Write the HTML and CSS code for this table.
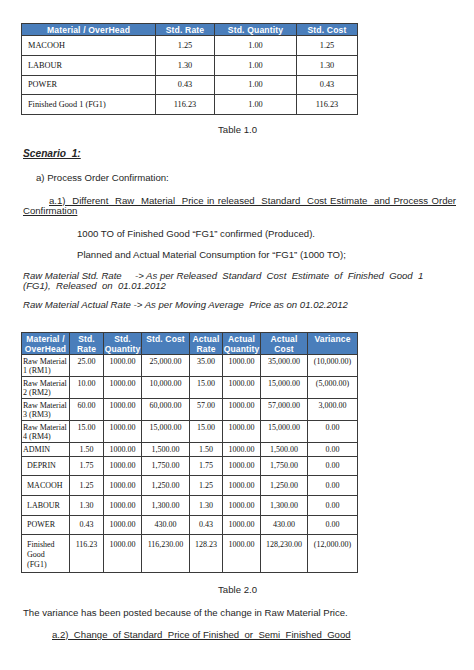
FILE: index.html
```html
<!DOCTYPE html>
<html>
<head>
<meta charset="utf-8">
<link rel="stylesheet" href="styles.css">
</head>
<body>
<div class="page">
  <table class="grid t1">
    <colgroup><col class="c134"><col class="c59"><col class="c82"><col class="c61"></colgroup>
    <thead>
      <tr class="h1"><th>Material / OverHead</th><th>Std. Rate</th><th>Std. Quantity</th><th>Std. Cost</th></tr>
    </thead>
    <tbody>
      <tr class="r20"><td class="name">MACOOH</td><td>1.25</td><td>1.00</td><td>1.25</td></tr>
      <tr class="r20"><td class="name">LABOUR</td><td>1.30</td><td>1.00</td><td>1.30</td></tr>
      <tr class="r19"><td class="name">POWER</td><td>0.43</td><td>1.00</td><td>0.43</td></tr>
      <tr class="r20"><td class="name">Finished Good 1 (FG1)</td><td>116.23</td><td>1.00</td><td>116.23</td></tr>
    </tbody>
  </table>

  <p class="caption cap1">Table 1.0</p>
  <p class="scenario">Scenario&nbsp; 1:</p>
  <p class="txt sub-a">a) Process Order Confirmation:</p>
  <p class="txt heading-a1">a.1)&nbsp; Different&nbsp; Raw&nbsp; Material&nbsp; Price in released&nbsp; Standard&nbsp; Cost Estimate&nbsp; and Process Order Confirmation</p>
  <p class="txt deep p1000">1000 TO of Finished Good “FG1” confirmed (Produced).</p>
  <p class="txt deep planned">Planned and Actual Material Consumption for “FG1” (1000 TO);</p>
  <p class="txt ital stdrate">Raw Material Std. Rate &nbsp;&nbsp;&nbsp;&nbsp;-&gt; As per Released&nbsp; Standard&nbsp; Cost&nbsp; Estimate&nbsp; of&nbsp; Finished&nbsp; Good&nbsp; 1<br>(FG1),&nbsp; Released&nbsp; on&nbsp; 01.01.2012</p>
  <p class="txt ital actrate">Raw Material Actual Rate -&gt; As per Moving Average&nbsp; Price as on 01.02.2012</p>

  <table class="grid t2">
    <colgroup><col class="w48"><col class="w34"><col class="w38"><col class="w48"><col class="w33"><col class="w38"><col class="w47"><col class="w50"></colgroup>
    <thead>
      <tr class="h2"><th>Material /<br>OverHead</th><th>Std.<br>Rate</th><th>Std.<br>Quantity</th><th class="top">Std. Cost</th><th>Actual<br>Rate</th><th>Actual<br>Quantity</th><th>Actual<br>Cost</th><th class="top">Variance</th></tr>
    </thead>
    <tbody>
      <tr class="rm"><td class="n1">Raw Material<br>1 (RM1)</td><td>25.00</td><td>1000.00</td><td>25,000.00</td><td>35.00</td><td>1000.00</td><td>35,000.00</td><td>(10,000.00)</td></tr>
      <tr class="rm"><td class="n1">Raw Material<br>2 (RM2)</td><td>10.00</td><td>1000.00</td><td>10,000.00</td><td>15.00</td><td>1000.00</td><td>15,000.00</td><td>(5,000.00)</td></tr>
      <tr class="rm"><td class="n1">Raw Material<br>3 (RM3)</td><td>60.00</td><td>1000.00</td><td>60,000.00</td><td>57.00</td><td>1000.00</td><td>57,000.00</td><td>3,000.00</td></tr>
      <tr class="rm"><td class="n1">Raw Material<br>4 (RM4)</td><td>15.00</td><td>1000.00</td><td>15,000.00</td><td>15.00</td><td>1000.00</td><td>15,000.00</td><td>0.00</td></tr>
      <tr class="admin"><td class="n1">ADMIN</td><td>1.50</td><td>1000.00</td><td>1,500.00</td><td>1.50</td><td>1000.00</td><td>1,500.00</td><td>0.00</td></tr>
      <tr class="mid h19"><td class="n2">DEPRIN</td><td>1.75</td><td>1000.00</td><td>1,750.00</td><td>1.75</td><td>1000.00</td><td>1,750.00</td><td>0.00</td></tr>
      <tr class="mid h20"><td class="n2">MACOOH</td><td>1.25</td><td>1000.00</td><td>1,250.00</td><td>1.25</td><td>1000.00</td><td>1,250.00</td><td>0.00</td></tr>
      <tr class="mid h20"><td class="n2">LABOUR</td><td>1.30</td><td>1000.00</td><td>1,300.00</td><td>1.30</td><td>1000.00</td><td>1,300.00</td><td>0.00</td></tr>
      <tr class="mid h19"><td class="n2">POWER</td><td>0.43</td><td>1000.00</td><td>430.00</td><td>0.43</td><td>1000.00</td><td>430.00</td><td>0.00</td></tr>
      <tr class="fg"><td class="n2">Finished<br>Good<br>(FG1)</td><td>116.23</td><td>1000.00</td><td>116,230.00</td><td>128.23</td><td>1000.00</td><td>128,230.00</td><td>(12,000.00)</td></tr>
    </tbody>
  </table>

  <p class="caption cap2">Table 2.0</p>
  <p class="txt variance">The variance has been posted because of the change in Raw Material Price.</p>
  <p class="txt heading-a2">a.2)&nbsp; Change&nbsp; of Standard&nbsp; Price of Finished&nbsp; or&nbsp; Semi&nbsp; Finished&nbsp; Good</p>
</div>
</body>
</html>
```

FILE: styles.css
```css
html, body {
  margin: 0;
  padding: 0;
  background: #ffffff;
}

.page {
  width: 474px;
  height: 670px;
  box-sizing: border-box;
  padding: 23px 18px 0 21px;
  font-family: "Liberation Sans", Arial, sans-serif;
  color: #262626;
  overflow: hidden;
}

p {
  margin: 0;
}

.grid {
  border-collapse: collapse;
  table-layout: fixed;
  width: 336px;
  font-family: "Liberation Serif", "Times New Roman", serif;
  color: #111111;
}

.grid th,
.grid td {
  border: 1px solid #3a3a3a;
  padding: 0;
  text-align: center;
  box-sizing: border-box;
}

.grid th {
  background: #4a7ebb;
  color: #ffffff;
  font-family: "Liberation Sans", Arial, sans-serif;
  font-weight: bold;
  font-size: 8.5px;
  letter-spacing: 0.15px;
}

.c134 { width: 134px; }
.c59 { width: 59px; }
.c82 { width: 82px; }
.c61 { width: 61px; }

.t1 .h1 th {
  height: 12px;
  line-height: 10px;
  font-size: 8.6px;
}

.t1 td {
  font-size: 8.3px;
  line-height: 10px;
  vertical-align: middle;
}

.t1 .r20 td { height: 20px; }
.t1 .r19 td { height: 19px; }

.t1 td.name {
  text-align: left;
  padding-left: 6px;
}

.caption {
  text-align: center;
  font-size: 9.6px;
  line-height: 10px;
  padding-right: 2px;
}

.cap1 { margin-top: 10px; }
.cap2 { margin-top: 12px; }

.scenario {
  margin-top: 14px;
  padding-left: 2px;
  font-size: 10.2px;
  line-height: 10px;
  font-weight: bold;
  font-style: italic;
  text-decoration: underline;
}

.txt {
  font-size: 9.6px;
  line-height: 10px;
  padding-left: 2px;
}

.sub-a {
  margin-top: 14px;
  padding-left: 15px;
}

.heading-a1 {
  margin-top: 13px;
  text-indent: 26px;
  text-align: justify;
  text-decoration: underline;
}

.deep { padding-left: 56px; }
.p1000 { margin-top: 13px; }
.planned { margin-top: 11px; }

.ital { font-style: italic; }
.stdrate { margin-top: 11px; }
.actrate { margin-top: 9px; }

.w48 { width: 48px; }
.w34 { width: 34px; }
.w38 { width: 38px; }
.w33 { width: 33px; }
.w47 { width: 47px; }
.w50 { width: 50px; }

.t2 {
  margin-top: 22px;
}

.t2 .h2 th {
  height: 22px;
  line-height: 10px;
  font-size: 8.5px;
  vertical-align: top;
  padding-top: 1px;
}

.t2 td {
  font-size: 8px;
  vertical-align: top;
}

.t2 .rm td {
  height: 22px;
  line-height: 9px;
  padding-top: 2px;
}

.t2 .admin td {
  height: 14px;
  line-height: 10px;
  padding-top: 2px;
}

.t2 .mid td {
  line-height: 10px;
  vertical-align: middle;
}

.t2 .h19 td { height: 19px; }
.t2 .h20 td { height: 20px; }

.t2 .fg td {
  height: 38px;
  line-height: 10px;
  padding-top: 5px;
}

.t2 td.n1 {
  text-align: left;
  padding-left: 1px;
}

.t2 td.n2 {
  text-align: left;
  padding-left: 5px;
}

.variance { margin-top: 13px; }

.heading-a2 {
  margin-top: 12px;
  padding-left: 31px;
  text-decoration: underline;
}
```
